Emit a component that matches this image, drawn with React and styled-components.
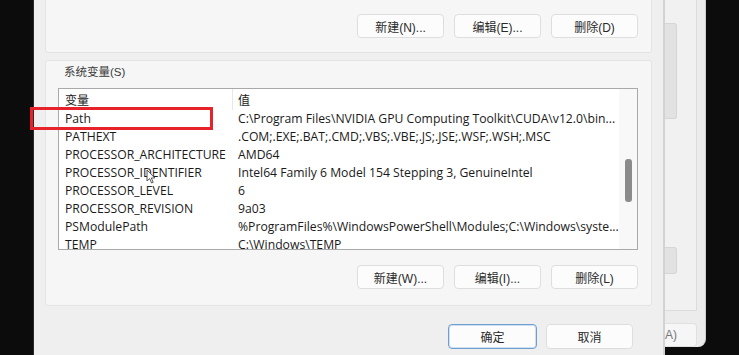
import styled, { createGlobalStyle } from "styled-components";

const Global = createGlobalStyle`
  html, body {
    margin: 0;
    padding: 0;
    background: #0c0c0c;
  }
  body {
    font-family: "Liberation Sans", "Noto Sans CJK SC", sans-serif;
    color: #1b1b1b;
  }
`;

const Screen = styled.div`
  position: relative;
  display: flex;
  align-items: flex-start;
  width: 739px;
  height: 355px;
  padding-left: 33px;
  box-sizing: border-box;
  overflow: hidden;
`;

const Dialog = styled.div`
  width: 632px;
  height: 355px;
  flex-shrink: 0;
  box-sizing: border-box;
  background: #efefef;
  border-left: 1px solid #2a2a2a;
  border-right: 2px solid #d2d2d2;
  padding: 0 11px 0 11px;
  display: flex;
  flex-direction: column;
  position: relative;
  z-index: 2;
`;

const Group = styled.div`
  background: #f6f6f6;
  border: 1px solid #e4e4e4;
  border-radius: 3px;
  box-sizing: border-box;
  display: flex;
  flex-direction: column;
`;

const UserGroup = styled(Group)`
  margin-top: -12px;
  height: 65px;
  justify-content: flex-end;
  padding: 0 13px 14px 0;
`;

const SysGroup = styled(Group)`
  margin-top: 7px;
  height: 246px;
  padding: 0 13px 15px 12px;
`;

const Label = styled.div`
  font-family: "Liberation Sans", "Noto Sans CJK SC", sans-serif;
  font-size: 11.5px;
  color: #3a3a3a;
  height: 27px;
  line-height: 22px;
  padding-left: 6px;
`;

const ButtonRow = styled.div`
  display: flex;
  justify-content: flex-end;
  gap: 10px;
`;

const Button = styled.div`
  width: ${(p) => p.$w || 87}px;
  height: ${(p) => p.$h || 24}px;
  box-sizing: border-box;
  background: #fcfcfc;
  border: 1px solid ${(p) => (p.$primary ? "#6f9fd0" : "#dedede")};
  box-shadow: ${(p) => (p.$primary ? "inset 0 0 0 1px #cfe0f2" : "none")};
  border-radius: 4px;
  display: flex;
  align-items: center;
  justify-content: center;
  font-family: "Liberation Sans", "Noto Sans CJK SC", sans-serif;
  font-size: 12px;
  color: #2a2a2a;
`;

const List = styled.div`
  height: 162px;
  background: #fff;
  border: 1px solid #a9a9a9;
  box-sizing: border-box;
  display: flex;
  overflow: hidden;
  margin-bottom: 15px;
`;

const Table = styled.div`
  flex: 1;
  display: flex;
  flex-direction: column;
  font-family: "Open Sans", "Noto Sans CJK SC", sans-serif;
  font-size: 12.2px;
  color: #1a1a1a;
  overflow: hidden;
`;

const Row = styled.div`
  display: grid;
  grid-template-columns: 174px 1fr;
  height: ${(p) => (p.$head ? 21 : 18)}px;
  line-height: ${(p) => (p.$head ? 21 : 18)}px;
  flex-shrink: 0;
  white-space: nowrap;
`;

const Cell = styled.div`
  padding-left: ${(p) => (p.$value ? 5 : 6)}px;
  overflow: hidden;
  font-family: ${(p) => (p.$cjk ? '"Noto Sans CJK SC", sans-serif' : "inherit")};
  font-size: ${(p) => (p.$cjk ? "12px" : "inherit")};
  border-right: ${(p) => (p.$divider ? "1px solid #e8e8e8" : "none")};
`;

const Scrollbar = styled.div`
  width: 18px;
  background: #f8f8f8;
  display: flex;
  justify-content: center;
  padding-top: 70px;
  box-sizing: border-box;
`;

const Thumb = styled.div`
  width: 7px;
  height: 43px;
  border-radius: 3px;
  background: #8b8b8b;
  margin-left: 1px;
`;

const Footer = styled.div`
  display: flex;
  justify-content: flex-end;
  gap: 9px;
  margin-top: 18px;
  padding-right: 19px;
`;

const Behind = styled.div`
  width: 41px;
  height: 347px;
  flex-shrink: 0;
  background: #ececec;
  border-radius: 0 0 8px 0;
  border-right: 1px solid #cfcfcf;
  box-sizing: border-box;
  overflow: hidden;
  display: flex;
  flex-direction: column;
  padding-right: 8px;
`;

const BehindPanel = styled.div`
  height: 303px;
  border: 1px solid #dcdcdc;
  border-top: none;
  border-left: none;
  background: #f1f1f1;
  display: flex;
  flex-direction: column;
  padding-top: 23px;
`;

const BehindBox = styled.div`
  width: 11px;
  height: ${(p) => p.$h}px;
  margin-top: ${(p) => p.$mt || 0}px;
  background: #e2e2e2;
  border: 1px solid #d6d6d6;
  border-left: none;
  border-radius: 0 3px 3px 0;
`;

const BehindButton = styled.div`
  margin-top: 12px;
  height: 23px;
  background: #f6f6f6;
  border: 1px solid #e0e0e0;
  border-left: none;
  border-radius: 0 4px 4px 0;
  font-size: 12px;
  color: #777;
  line-height: 22px;
  overflow: hidden;
  white-space: nowrap;
`;

const Highlight = styled.div`
  position: absolute;
  left: 30px;
  top: 107px;
  width: 183px;
  height: 23px;
  border: 3px solid #e8222b;
  box-sizing: border-box;
  z-index: 5;
`;

const Cursor = styled.svg`
  position: absolute;
  left: 146px;
  top: 169px;
  z-index: 6;
`;

const rows = [
  ["Path", "C:\\Program Files\\NVIDIA GPU Computing Toolkit\\CUDA\\v12.0\\bin..."],
  ["PATHEXT", ".COM;.EXE;.BAT;.CMD;.VBS;.VBE;.JS;.JSE;.WSF;.WSH;.MSC"],
  ["PROCESSOR_ARCHITECTURE", "AMD64"],
  ["PROCESSOR_IDENTIFIER", "Intel64 Family 6 Model 154 Stepping 3, GenuineIntel"],
  ["PROCESSOR_LEVEL", "6"],
  ["PROCESSOR_REVISION", "9a03"],
  ["PSModulePath", "%ProgramFiles%\\WindowsPowerShell\\Modules;C:\\Windows\\syste..."],
  ["TEMP", "C:\\Windows\\TEMP"],
];

export default function App() {
  return (
    <>
      <Global />
      <Screen>
        <Dialog>
          <UserGroup>
            <ButtonRow>
              <Button>新建(N)...</Button>
              <Button>编辑(E)...</Button>
              <Button>删除(D)</Button>
            </ButtonRow>
          </UserGroup>

          <SysGroup>
            <Label>系统变量(S)</Label>
            <List>
              <Table>
                <Row $head>
                  <Cell $cjk $divider>变量</Cell>
                  <Cell $cjk $value>值</Cell>
                </Row>
                {rows.map(([name, value]) => (
                  <Row key={name}>
                    <Cell>{name}</Cell>
                    <Cell $value>{value}</Cell>
                  </Row>
                ))}
              </Table>
              <Scrollbar>
                <Thumb />
              </Scrollbar>
            </List>
            <ButtonRow>
              <Button>新建(W)...</Button>
              <Button>编辑(I)...</Button>
              <Button>删除(L)</Button>
            </ButtonRow>
          </SysGroup>

          <Footer>
            <Button $primary $w={89} $h={25}>确定</Button>
            <Button $w={87} $h={25}>取消</Button>
          </Footer>
        </Dialog>

        <Behind>
          <BehindPanel>
            <BehindBox $h={94} />
            <BehindBox $h={25} $mt={128} />
          </BehindPanel>
          <BehindButton>A)</BehindButton>
        </Behind>

        <Highlight />
        <Cursor width="10" height="15" viewBox="0 0 10 15">
          <path d="M1 1 L1 12 L3.6 9.6 L5.6 14 L7.2 13.3 L5.3 9 L8.8 9 Z" fill="#ffffff" stroke="#444" strokeWidth="0.9" strokeLinejoin="round" />
        </Cursor>
      </Screen>
    </>
  );
}
